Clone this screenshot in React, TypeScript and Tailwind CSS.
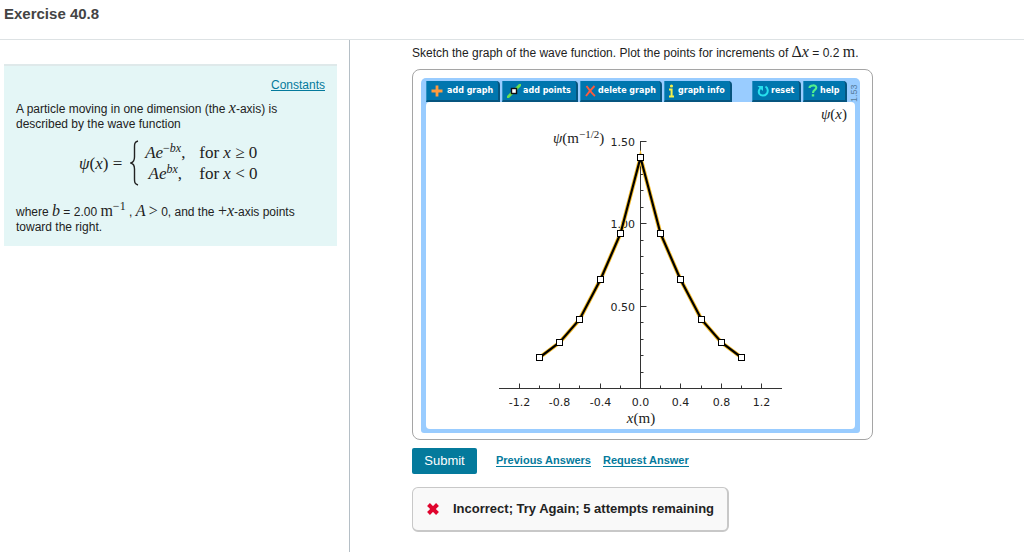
import React from "react"

const MATH = "font-['Liberation_Serif',serif]"

interface ToolButtonProps {
  label: string
  className: string
  children: React.ReactNode
}

function ToolButton({ label, className, children }: ToolButtonProps) {
  return (
    <button
      type="button"
      className={`flex h-[21px] items-center rounded-tr-[4px] border-r-2 border-b-2 border-l border-[#06557f] border-l-[#2f93c4] bg-[#0076ae] pl-1 font-['DejaVu_Sans',sans-serif] text-[8px] font-bold whitespace-nowrap text-white ${className}`}
    >
      {children}
      <span>{label}</span>
    </button>
  )
}

function Toolbar() {
  return (
    <div className="flex items-start justify-between">
      <div className="flex gap-[2px]">
        <ToolButton label="add graph" className="w-[74px] gap-1">
          <svg width="12" height="12" viewBox="0 0 12 12" className="shrink-0">
            <path d="M6 0.5V11.5M0.5 6H11.5" stroke="#ff9a3c" strokeWidth="2.8" />
          </svg>
        </ToolButton>
        <ToolButton label="add points" className="w-[76px] gap-[2px]">
          <svg width="14" height="14" viewBox="0 0 14 14" className="shrink-0">
            <path d="M1 13L13 1" stroke="#6be04e" strokeWidth="2.8" strokeLinecap="round" />
            <rect x="4.5" y="4.5" width="5" height="5" fill="#fff" stroke="#111" strokeWidth="1.4" />
          </svg>
        </ToolButton>
        <ToolButton label="delete graph" className="w-[82px] gap-[2px]">
          <svg width="11" height="12" viewBox="0 0 11 12" className="shrink-0">
            <path d="M1.5 1C4 4.5 7 8.5 10 11M9.5 1C6.5 4 3.5 7.5 1 11" fill="none" stroke="#ff5a3a" strokeWidth="1.9" />
          </svg>
        </ToolButton>
        <ToolButton label="graph info" className="w-[68px] gap-1">
          <svg width="5" height="14" viewBox="0 0 5 14" className="shrink-0">
            <circle cx="2.5" cy="2" r="1.6" fill="#f4f04a" />
            <path d="M0 5.5H2.6V12M0 12.5H5" fill="none" stroke="#f4f04a" strokeWidth="2" />
          </svg>
        </ToolButton>
      </div>
      <div className="flex gap-[2px]">
        <ToolButton label="reset" className="w-[49px] gap-[2px]">
          <svg width="12" height="12" viewBox="0 0 12 12" className="shrink-0">
            <path d="M8.5 1.5C11.2 3.2 11.4 7 9.5 9C7.5 11.2 4 11 2.5 9C1.3 7.2 1.8 5 3.4 3" fill="none" stroke="#27e0ee" strokeWidth="2" />
            <path d="M0.5 1H6V6Z" fill="#27e0ee" />
          </svg>
        </ToolButton>
        <ToolButton label="help" className="w-[44px] gap-[2px]">
          <svg width="10" height="13" viewBox="0 0 10 13" className="shrink-0">
            <path d="M1.5 4C1.5 0.7 8.5 0.5 8.3 3.8C8.2 6 5 6 5 9" fill="none" stroke="#52f08c" strokeWidth="2.1" />
            <rect x="3.8" y="10.2" width="2.4" height="2.3" fill="#52f08c" />
          </svg>
        </ToolButton>
        <span className="h-[21px] w-[10px] rotate-180 font-['Liberation_Sans',sans-serif] text-[9px] leading-[10px] text-[#557b9c] [writing-mode:vertical-rl]">
          1.53
        </span>
      </div>
    </div>
  )
}

// plot coordinates: origin of the axes and pixels per unit
const ORIGIN_X = 214.5
const ORIGIN_Y = 286.5
const X_UNIT = 101
const Y_UNIT = 164.7

const toX = (v: number) => Math.round(v * X_UNIT) + ORIGIN_X
const toY = (v: number) => ORIGIN_Y - Math.round(v * Y_UNIT)

const points = [
  [-1, 0.19],
  [-0.8, 0.28],
  [-0.6, 0.42],
  [-0.4, 0.66],
  [-0.2, 0.94],
  [0, 1.405],
  [0.2, 0.94],
  [0.4, 0.66],
  [0.6, 0.42],
  [0.8, 0.28],
  [1, 0.19],
]

const xTicks = Array.from({ length: 13 }, (_, i) => i - 6)
const yTicks = Array.from({ length: 15 }, (_, i) => i + 1)

function Plot() {
  const line = points.map(([x, y]) => `${toX(x)},${toY(y)}`).join(" ")

  return (
    <svg viewBox="0 0 429 327" className="block w-full" role="img" aria-label="ψ(x)">
      <g stroke="#333" strokeWidth="1" fill="none">
        <path d={`M73 ${ORIGIN_Y}H356M${ORIGIN_X} ${ORIGIN_Y}V39`} />
        {xTicks.map((i) => (
          <path key={i} d={`M${toX(i / 5)} ${ORIGIN_Y}v${i % 2 === 0 ? -5 : -3}`} />
        ))}
        {yTicks.map((i) => (
          <path key={i} d={`M${ORIGIN_X} ${toY(i / 10)}h${i % 5 === 0 ? 6 : 3}`} />
        ))}
      </g>

      <g className="font-['DejaVu_Sans',sans-serif] text-[11px]" fill="#222">
        {[1.5, 1, 0.5].map((v) => (
          <text key={v} x="209" y={toY(v) + 4} textAnchor="end">
            {v.toFixed(2)}
          </text>
        ))}
        {[-1.2, -0.8, -0.4, 0, 0.4, 0.8, 1.2].map((v) => (
          <text key={v} x={toX(v)} y="304" textAnchor="middle">
            {v.toFixed(1)}
          </text>
        ))}
      </g>

      <polyline points={line} fill="none" stroke="#f5bd2b" strokeWidth="4" />
      <polyline points={line} fill="none" stroke="#000" strokeWidth="2.2" />
      {points.map(([x, y]) => (
        <rect key={x} x={toX(x) - 3} y={toY(y) - 3} width="6" height="6" fill="#fff" stroke="#000" />
      ))}

      <g className={`${MATH} text-[15px]`} fill="#222">
        <text x="421" y="17" textAnchor="end">
          <tspan fontStyle="italic">ψ</tspan>(<tspan fontStyle="italic">x</tspan>)
        </text>
        <text x="127" y="41">
          <tspan fontStyle="italic">ψ</tspan>(m
          <tspan dy="-5" fontSize="11">−1/2</tspan>
          <tspan dy="5">)</tspan>
        </text>
        <text x="215" y="321" textAnchor="middle">
          <tspan fontStyle="italic">x</tspan>(m)
        </text>
      </g>
    </svg>
  )
}

function WaveFunction() {
  return (
    <div className={`${MATH} mt-2 flex items-center pl-[63px] text-[17px] leading-[21px]`}>
      <span className="whitespace-nowrap">
        <i>ψ</i>(<i>x</i>) =
      </span>
      <svg width="9" height="46" viewBox="0 0 9 46" className="mr-1 ml-2 shrink-0">
        <path d="M8 1C4.5 2 4.5 4 4.5 7V17C4.5 20 4 22 1 23C4 24 4.5 26 4.5 29V39C4.5 42 4.5 44 8 45" fill="none" stroke="#222" strokeWidth="1.4" />
      </svg>
      <div className="grid grid-cols-[44px_auto] gap-x-3 whitespace-nowrap">
        <span className="text-center">
          <i>Ae</i>
          <sup className="text-[12px]">
            −<i>bx</i>
          </sup>
          ,
        </span>
        <span>
          for <i>x</i> ≥ 0
        </span>
        <span className="text-center">
          <i>Ae</i>
          <sup className="text-[12px]">
            <i>bx</i>
          </sup>
          ,
        </span>
        <span>
          for <i>x</i> &lt; 0
        </span>
      </div>
    </div>
  )
}

function ProblemPanel() {
  return (
    <aside className="w-[350px] shrink-0 border-r border-[#b5bfc6] pt-6 pr-3 pl-1">
      <div className="border-t-2 border-[#dfe9ea] bg-[#e4f6f6] px-3 pt-3 pb-[11px] text-[12px] leading-[15px]">
        <div className="text-right">
          <a href="#constants" className="text-[#047a9c] underline">
            Constants
          </a>
        </div>
        <p className="mt-[7px]">
          A particle moving in one dimension (the <i className={`${MATH} text-[16px] leading-none`}>x</i>-axis) is
          <br />
          described by the wave function
        </p>
        <WaveFunction />
        <p className="mt-[17px]">
          where <i className={`${MATH} text-[16px] leading-none`}>b</i> = 2.00{" "}
          <span className={`${MATH} text-[16px] leading-none`}>
            m<sup className="text-[12px]">−1</sup>
          </span>{" "}
          , <i className={`${MATH} text-[16px] leading-none`}>A</i>{" "}
          <span className={`${MATH} text-[16px] leading-none`}>&gt;</span> 0, and the{" "}
          <span className={`${MATH} text-[16px] leading-none`}>
            +<i>x</i>
          </span>
          -axis points
          <br />
          toward the right.
        </p>
      </div>
    </aside>
  )
}

export default function App() {
  return (
    <div className="flex min-h-screen flex-col bg-white font-['Liberation_Sans',Arial,sans-serif] text-[#222]">
      <header className="border-b border-[#dde2e4] px-1 pt-1 pb-[15px]">
        <h1 className="text-[15px] leading-5 font-bold text-[#444]">Exercise 40.8</h1>
      </header>

      <div className="flex grow">
        <ProblemPanel />

        <main className="min-w-0 grow pt-1 pl-[62px] text-[12px]">
          <p className="leading-4">
            Sketch the graph of the wave function. Plot the points for increments of{" "}
            <span className={`${MATH} text-[16px] leading-none`}>
              Δ<i>x</i>
            </span>{" "}
            = 0.2 <span className={`${MATH} text-[16px] leading-none`}>m</span>.
          </p>

          {/* Graph applet */}
          <div className="mt-2 max-w-[461px] rounded-lg border border-[#a5a5a5] pt-2 pr-3 pb-[6px] pl-2">
            <div className="rounded-t-[5px] rounded-b-[3px] bg-[#99ccff] pt-[3px] pr-px pb-1 pl-[5px]">
              <Toolbar />
              <div className="mr-1 overflow-hidden rounded-[4px] bg-white">
                <Plot />
              </div>
            </div>
          </div>

          <div className="mt-2 flex items-center">
            <button type="button" className="h-[26px] w-[65px] rounded-[2px] bg-[#047a9c] text-[13px] text-white">
              Submit
            </button>
            <div className="ml-[19px] flex gap-3 pb-[2px] text-[11px] leading-[12px] font-bold text-[#047a9c]">
              <a href="#previous" className="border-b border-[#047a9c]">
                Previous Answers
              </a>
              <a href="#request" className="border-b border-[#047a9c]">
                Request Answer
              </a>
            </div>
          </div>

          {/* Feedback */}
          <div className="mt-[13px] inline-flex h-[45px] items-center gap-[13px] rounded-md border border-r-2 border-b-2 border-[#c8c8c8] bg-[#f9f9f9] px-[13px]">
            <svg width="14" height="14" viewBox="0 0 14 14">
              <path d="M2.5 2.5L11.5 11.5M11.5 2.5L2.5 11.5" stroke="#e0052e" strokeWidth="4" />
            </svg>
            <strong className="text-[13px]">Incorrect; Try Again; 5 attempts remaining</strong>
          </div>
        </main>
      </div>
    </div>
  )
}
